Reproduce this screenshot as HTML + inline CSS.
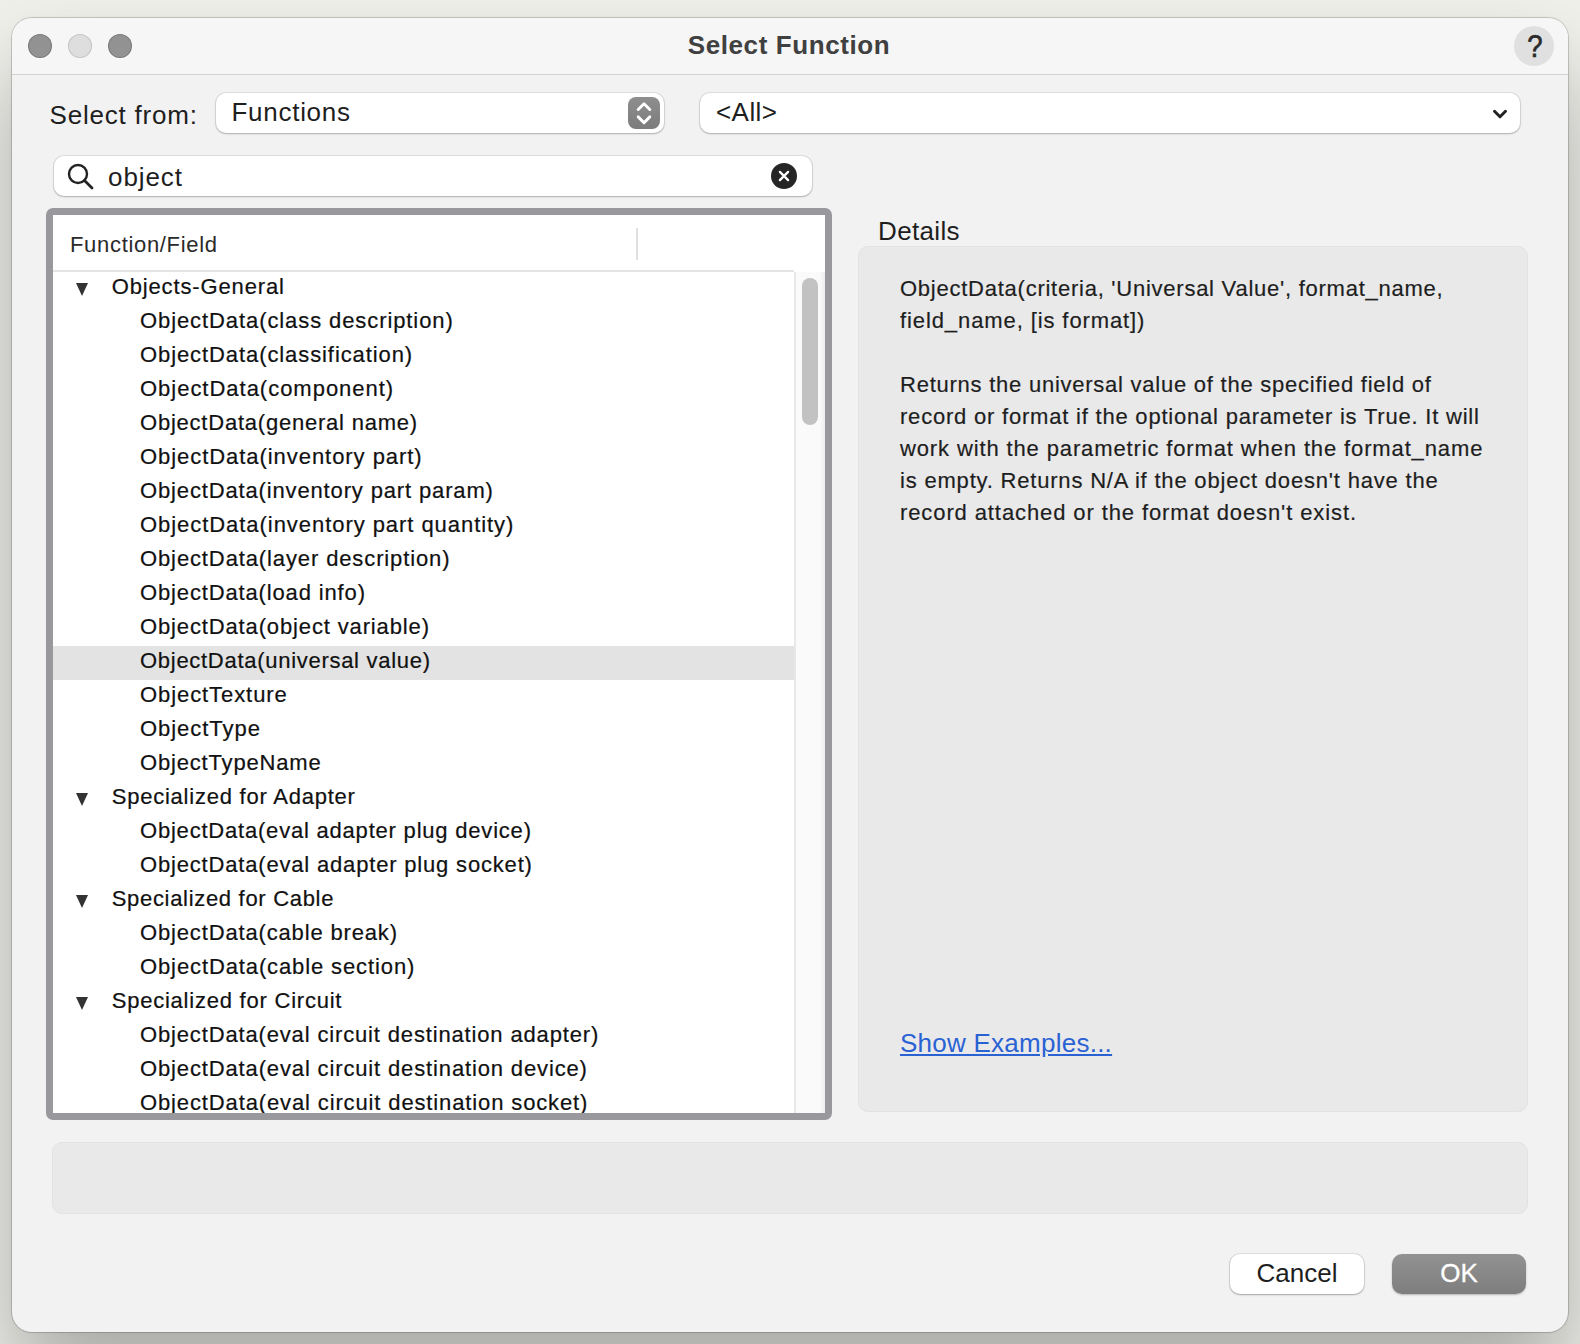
<!DOCTYPE html>
<html lang="en">
<head>
<meta charset="utf-8">
<title>Select Function</title>
<style>
*{box-sizing:border-box;margin:0;padding:0}
html,body{width:1580px;height:1344px;overflow:hidden}
body{font-family:"Liberation Sans","DejaVu Sans",sans-serif;color:#1e1e1e;background:#f1f1ec;position:relative}
.abs{position:absolute}
#bg{left:0;top:0;width:1580px;height:1344px;background:#f1f1ec}
#win{left:12px;top:18px;width:1556px;height:1314px;border-radius:20px;background:#f2f2f2;
 box-shadow:0 0 0 1px rgba(0,0,0,.14),0 52px 90px rgba(0,0,0,.30),0 0 3px rgba(0,0,0,.10);overflow:hidden}
#tb{left:0;top:0;width:1556px;height:57px;background:#f6f6f6;border-bottom:1px solid #d2d2d2}
.tl{width:24px;height:24px;border-radius:50%;top:16px;border:1px solid rgba(0,0,0,.18)}
#title{left:-1px;width:1556px;top:11px;text-align:center;font-weight:bold;font-size:26px;color:#404040;line-height:32px;letter-spacing:.6px}
#help{left:1502px;top:8px;width:40px;height:40px;border-radius:50%;background:#e0e0e0;text-align:center;font-size:32px;line-height:40px;color:#2a2a2a;-webkit-text-stroke:.7px #2a2a2a}
.lbl{font-size:26px;line-height:32px;white-space:nowrap;color:#1e1e1e}
.field{background:#fff;border-radius:10px;box-shadow:0 0 0 1px rgba(0,0,0,.08),0 1px 2px rgba(0,0,0,.22)}
#list{left:34px;top:190px;width:786px;height:912px;border:7px solid #98989d;border-radius:7px;background:#fff;overflow:hidden}
.row{position:absolute;left:0;width:741px;height:34px;font-size:22px;letter-spacing:.83px;line-height:34px;white-space:nowrap;color:#111;-webkit-text-stroke:.22px #111}
.row.g{padding-left:58.7px}
.row.i{padding-left:87px}
.row .tri{position:absolute;left:23px;top:13px;width:0;height:0;border-left:6px solid transparent;border-right:6px solid transparent;border-top:13px solid #333}
.sel{background:#e3e3e3}
#det{left:846px;top:228px;width:670px;height:866px;background:#e9e9e9;border:1px solid #e2e2e2;border-radius:10px}
#dtext{left:888px;top:255px;width:620px;font-size:22px;letter-spacing:.8px;line-height:32px;color:#1e1e1e;white-space:nowrap;-webkit-text-stroke:.2px #1e1e1e}
#link{left:888px;top:1008px;font-size:26px;line-height:34px;color:#2a62d4;text-decoration:underline;white-space:nowrap;letter-spacing:.25px}
#bot{left:40px;top:1124px;width:1476px;height:72px;background:#e9e9e9;border:1px solid #e2e2e2;border-radius:10px}
.btn{top:1236px;width:134px;height:40px;border-radius:10px;text-align:center;font-size:26px;line-height:38px}
</style>
</head>
<body>
<div id="bg" class="abs"></div>
<div id="win" class="abs">
  <div id="tb" class="abs"></div>
  <div class="abs tl" style="left:16px;background:#929292"></div>
  <div class="abs tl" style="left:56px;background:#dedede;border-color:rgba(0,0,0,.12)"></div>
  <div class="abs tl" style="left:96px;background:#929292"></div>
  <div id="title" class="abs">Select Function</div>
  <div id="help" class="abs"><span style="display:inline-block;transform:scaleX(.86);margin-left:2px">?</span></div>

  <div class="abs lbl" style="left:37.5px;top:81px;letter-spacing:.8px">Select from:</div>

  <div class="abs field" style="left:204px;top:75px;width:448px;height:40px"></div>
  <div class="abs lbl" style="left:219.5px;top:78px;letter-spacing:.72px">Functions</div>
  <div class="abs" style="left:616px;top:79px;width:32px;height:32px;border-radius:8px;background:linear-gradient(#8e8e8e,#7c7c7c)">
    <svg width="32" height="32" viewBox="0 0 32 32" style="display:block"><path d="M10.2 12.5 L16 6.7 L21.8 12.5 M10.2 19.9 L16 25.7 L21.8 19.9" fill="none" stroke="#fff" stroke-width="2.9" stroke-linecap="round" stroke-linejoin="round"/></svg>
  </div>

  <div class="abs field" style="left:688px;top:75px;width:820px;height:40px"></div>
  <div class="abs lbl" style="left:704px;top:78px;letter-spacing:.43px">&lt;All&gt;</div>
  <svg class="abs" style="left:1478px;top:89px" width="20" height="16" viewBox="0 0 20 16"><path d="M4.5 4.3 L10 9.8 L15.5 4.3" fill="none" stroke="#222" stroke-width="3" stroke-linecap="round" stroke-linejoin="round"/></svg>

  <div class="abs field" style="left:42px;top:138px;width:758px;height:40px"></div>
  <svg class="abs" style="left:54px;top:144px" width="30" height="30" viewBox="0 0 30 30"><circle cx="12" cy="12" r="9" fill="none" stroke="#222" stroke-width="2.4"/><path d="M18.5 18.5 L26 26" stroke="#222" stroke-width="2.8" stroke-linecap="round"/></svg>
  <div class="abs lbl" style="left:96px;top:143px;letter-spacing:.92px">object</div>
  <div class="abs" style="left:759px;top:145px;width:26px;height:26px;border-radius:50%;background:#252525">
    <svg width="26" height="26" viewBox="0 0 26 26" style="display:block"><path d="M8.9 8.9 L17.1 17.1 M17.1 8.9 L8.9 17.1" stroke="#fff" stroke-width="2.3" stroke-linecap="round"/></svg>
  </div>

  <div id="list" class="abs">
    <div class="abs" style="left:0;top:0;width:772px;height:56px;background:#fff"></div>
    <div class="abs" style="left:17px;top:14px;font-size:22px;letter-spacing:.68px;line-height:32px;color:#2a2a2a;white-space:nowrap">Function/Field</div>
    <div class="abs" style="left:583px;top:13px;width:2px;height:32px;background:#e0e0e0"></div>
    <div class="abs" style="left:0;top:55px;width:741px;height:2px;background:#e4e4e4"></div>
    <div class="abs" style="left:741px;top:57px;width:31px;height:850px;background:linear-gradient(90deg,#e8e8e8 0,#e8e8e8 2px,#fafafa 2px,#fafafa 26px,#ededed 31px)"></div>
    <div class="abs" style="left:749px;top:63px;width:16px;height:147px;border-radius:8px;background:#c2c2c2"></div>

    <div class="row g" style="top:55px;letter-spacing:0.866px"><span class="tri"></span>Objects-General</div>
    <div class="row i" style="top:89px;letter-spacing:0.909px">ObjectData(class description)</div>
    <div class="row i" style="top:123px;letter-spacing:0.91px">ObjectData(classification)</div>
    <div class="row i" style="top:157px;letter-spacing:0.98px">ObjectData(component)</div>
    <div class="row i" style="top:191px;letter-spacing:0.778px">ObjectData(general name)</div>
    <div class="row i" style="top:225px;letter-spacing:0.946px">ObjectData(inventory part)</div>
    <div class="row i" style="top:259px;letter-spacing:0.853px">ObjectData(inventory part param)</div>
    <div class="row i" style="top:293px;letter-spacing:0.948px">ObjectData(inventory part quantity)</div>
    <div class="row i" style="top:327px;letter-spacing:0.88px">ObjectData(layer description)</div>
    <div class="row i" style="top:361px;letter-spacing:0.855px">ObjectData(load info)</div>
    <div class="row i" style="top:395px;letter-spacing:0.861px">ObjectData(object variable)</div>
    <div class="abs sel" style="left:0;top:431px;width:741px;height:34px"></div>
    <div class="row i" style="top:429px;letter-spacing:0.715px">ObjectData(universal value)</div>
    <div class="row i" style="top:463px;letter-spacing:0.922px">ObjectTexture</div>
    <div class="row i" style="top:497px;letter-spacing:0.963px">ObjectType</div>
    <div class="row i" style="top:531px;letter-spacing:0.822px">ObjectTypeName</div>
    <div class="row g" style="top:565px;letter-spacing:0.771px"><span class="tri"></span>Specialized for Adapter</div>
    <div class="row i" style="top:599px;letter-spacing:0.793px">ObjectData(eval adapter plug device)</div>
    <div class="row i" style="top:633px;letter-spacing:0.821px">ObjectData(eval adapter plug socket)</div>
    <div class="row g" style="top:667px;letter-spacing:0.69px"><span class="tri"></span>Specialized for Cable</div>
    <div class="row i" style="top:701px;letter-spacing:0.844px">ObjectData(cable break)</div>
    <div class="row i" style="top:735px;letter-spacing:0.884px">ObjectData(cable section)</div>
    <div class="row g" style="top:769px;letter-spacing:0.775px"><span class="tri"></span>Specialized for Circuit</div>
    <div class="row i" style="top:803px;letter-spacing:0.846px">ObjectData(eval circuit destination adapter)</div>
    <div class="row i" style="top:837px;letter-spacing:0.859px">ObjectData(eval circuit destination device)</div>
    <div class="row i" style="top:871px;letter-spacing:0.87px">ObjectData(eval circuit destination socket)</div>
  </div>

  <div class="abs lbl" style="left:866px;top:197px;letter-spacing:.35px">Details</div>
  <div id="det" class="abs"></div>
  <div id="dtext" class="abs"><span style="letter-spacing:.75px">ObjectData(criteria, 'Universal Value', format_name,</span><br><span style="letter-spacing:.9px">field_name, [is format])</span><br><br><span style="letter-spacing:.755px">Returns the universal value of the specified field of</span><br><span style="letter-spacing:.79px">record or format if the optional parameter is True. It will</span><br><span style="letter-spacing:.87px">work with the parametric format when the format_name</span><br><span style="letter-spacing:.805px">is empty. Returns N/A if the object doesn't have the</span><br><span style="letter-spacing:.895px">record attached or the format doesn't exist.</span></div>
  <div id="link" class="abs">Show Examples...</div>

  <div id="bot" class="abs"></div>

  <div class="abs btn" style="left:1218px;background:#fff;color:#1e1e1e;box-shadow:0 0 0 1px rgba(0,0,0,.08),0 1px 2px rgba(0,0,0,.25)">Cancel</div>
  <div class="abs btn" style="left:1380px;background:linear-gradient(#929292,#7e7e7e);color:#fff;-webkit-text-stroke:.3px #fff;box-shadow:0 1px 2px rgba(0,0,0,.25)">OK</div>
</div>
</body>
</html>
